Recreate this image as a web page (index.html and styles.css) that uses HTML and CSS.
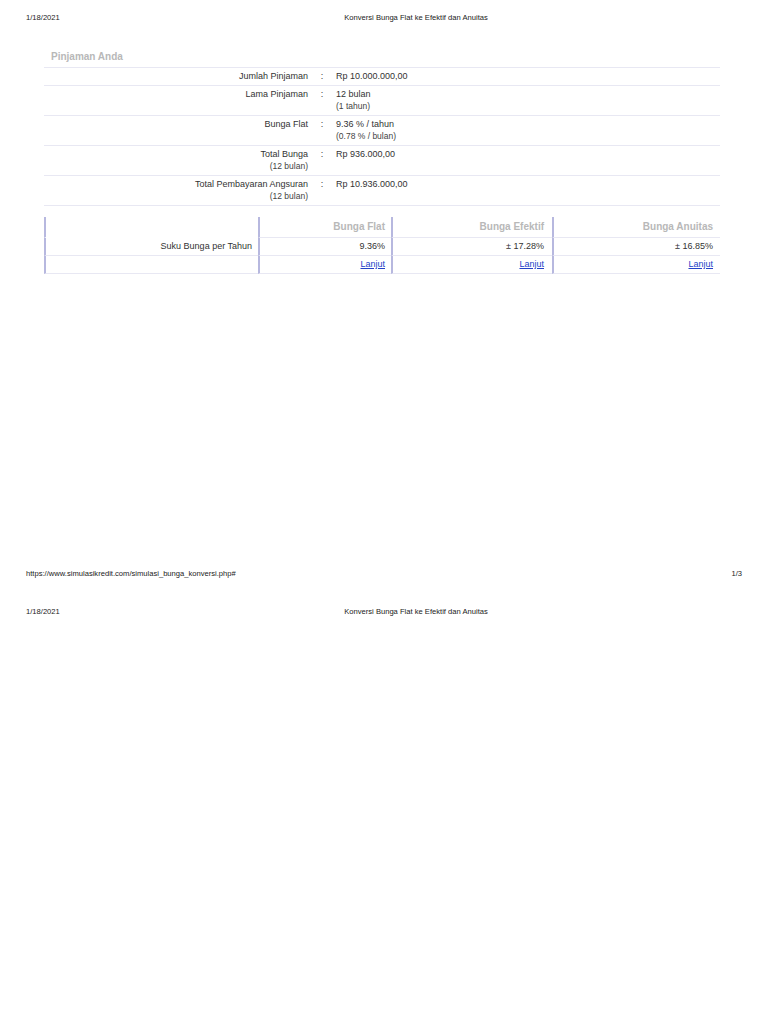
FILE: index.html
```html
<!DOCTYPE html>
<html lang="id">
<head>
<meta charset="utf-8">
<title>Konversi Bunga Flat ke Efektif dan Anuitas</title>
<link rel="stylesheet" href="styles.css">
</head>
<body>
<div class="sheet">
  <div class="print-head">
    <span class="print-date">1/18/2021</span>
    <span class="print-title">Konversi Bunga Flat ke Efektif dan Anuitas</span>
  </div>

  <main class="content">
    <h2 class="section-title">Pinjaman Anda</h2>
    <table class="loan">
      <tr>
        <td class="label">Jumlah Pinjaman</td>
        <td class="colon">:</td>
        <td class="value">Rp 10.000.000,00</td>
      </tr>
      <tr>
        <td class="label">Lama Pinjaman</td>
        <td class="colon">:</td>
        <td class="value">12 bulan<span class="sub">(1 tahun)</span></td>
      </tr>
      <tr>
        <td class="label">Bunga Flat</td>
        <td class="colon">:</td>
        <td class="value">9.36 % / tahun<span class="sub">(0.78 % / bulan)</span></td>
      </tr>
      <tr>
        <td class="label">Total Bunga<span class="sub">(12 bulan)</span></td>
        <td class="colon">:</td>
        <td class="value">Rp 936.000,00</td>
      </tr>
      <tr>
        <td class="label">Total Pembayaran Angsuran<span class="sub">(12 bulan)</span></td>
        <td class="colon">:</td>
        <td class="value">Rp 10.936.000,00</td>
      </tr>
    </table>

    <table class="compare">
      <thead>
        <tr>
          <th class="c1 blank"></th>
          <th class="c2">Bunga Flat</th>
          <th class="c3">Bunga Efektif</th>
          <th class="c4">Bunga Anuitas</th>
        </tr>
      </thead>
      <tbody>
        <tr>
          <td>Suku Bunga per Tahun</td>
          <td>9.36%</td>
          <td>± 17.28%</td>
          <td>± 16.85%</td>
        </tr>
        <tr>
          <td></td>
          <td><a href="#">Lanjut</a></td>
          <td><a href="#">Lanjut</a></td>
          <td><a href="#">Lanjut</a></td>
        </tr>
      </tbody>
    </table>
  </main>

  <div class="print-foot">
    <span>https://www.simulasikredit.com/simulasi_bunga_konversi.php#</span>
    <span>1/3</span>
  </div>
</div>

<div class="sheet sheet-next">
  <div class="print-head">
    <span class="print-date">1/18/2021</span>
    <span class="print-title">Konversi Bunga Flat ke Efektif dan Anuitas</span>
  </div>
</div>
</body>
</html>
```

FILE: styles.css
```css
html, body {
  margin: 0;
  padding: 0;
  background: #ffffff;
}

body {
  font-family: "Liberation Sans", Arial, sans-serif;
  color: #333333;
}

.sheet {
  height: 594px;
  display: flex;
  flex-direction: column;
}

.sheet-next {
  height: 430px;
}

.print-head {
  display: flex;
  padding: 12px 26px 0 26px;
  height: 24px;
  font-size: 7.6px;
  line-height: 12px;
  color: #222222;
}

.print-date {
  width: 64px;
  flex: none;
}

.print-title {
  flex: 1;
  text-align: center;
}

.content {
  flex: 1;
  margin: 0 48px 0 44px;
}

.section-title {
  margin: 0;
  padding: 15px 7px 4px 7px;
  font-size: 10px;
  line-height: 12px;
  font-weight: bold;
  color: #b8b8b8;
}

.loan {
  width: 100%;
  border-collapse: collapse;
  font-size: 9px;
  line-height: 11px;
}

.loan tr {
  border-top: 1px solid #e8e8f3;
}

.loan tr:last-child {
  border-bottom: 1px solid #e8e8f3;
}

.loan td {
  padding: 3px 0;
  vertical-align: top;
}

.loan .label {
  width: 264px;
  padding-right: 6px;
  text-align: right;
}

.loan .colon {
  width: 16px;
  text-align: center;
}

.loan .value {
  padding-left: 6px;
  text-align: left;
}

.sub {
  display: block;
  font-size: 8.5px;
  line-height: 12px;
  color: #444444;
}

.compare {
  width: 100%;
  margin-top: 11px;
  border-collapse: separate;
  border-spacing: 0;
  table-layout: fixed;
  font-size: 9px;
  line-height: 11px;
}

.compare th,
.compare td {
  border-left: 2px solid #b7b8df;
  text-align: right;
  padding: 3px 6px 3px 0;
}

.compare th {
  font-size: 10px;
  line-height: 12px;
  padding-top: 4px;
  padding-bottom: 4px;
  font-weight: bold;
  color: #b8b8b8;
  border-bottom: 1px solid #e8e8f3;
}

.compare th.blank {
  border-bottom-color: transparent;
}

.compare th.c1 { width: 206px; }
.compare th.c2 { width: 125px; }
.compare th.c3 { width: 151px; padding-right: 8px; }
.compare th.c4 { padding-right: 7px; }

.compare td {
  border-bottom: 1px solid #e8e8f3;
}

.compare td:nth-child(3) { padding-right: 8px; }
.compare td:nth-child(4) { padding-right: 7px; }

.compare a {
  color: #2342c8;
  text-decoration: underline;
}

.print-foot {
  display: flex;
  justify-content: space-between;
  padding: 0 26px 14px 26px;
  font-size: 7.6px;
  line-height: 12px;
  color: #222222;
}
```
